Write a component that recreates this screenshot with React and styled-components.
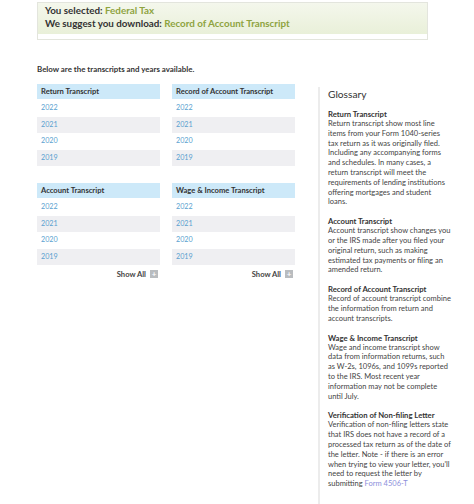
import React from 'react'
import styled, { createGlobalStyle } from 'styled-components'

const Global = createGlobalStyle`
  html, body { margin: 0; padding: 0; background: #fff; }
  body { font-family: Lato, "Liberation Sans", sans-serif; color: #333; }
  * { box-sizing: border-box; }
`

const Page = styled.div`
  width: 474px;
  padding: 2px 0 0 37px;
`

const Banner = styled.div`
  width: 391px;
  border: 1px solid #e3e5dd;
  background: #fff;
  padding-bottom: 5px;
`

const BannerInner = styled.div`
  background: linear-gradient(#f4f7ec, #e9f0d9);
  padding: 1px 7px 4px;
  & > p {
    margin: 0;
    font-size: 9.8px;
    line-height: 13px;
    font-weight: 700;
    color: #333;
  }
  & span { color: #8ea33f; }
`

const Body = styled.div`
  display: flex;
  align-items: flex-start;
  margin-top: 23px;
`

const Main = styled.div`
  width: 258px;
  flex: none;
`

const Intro = styled.p`
  margin: 0 0 9px;
  font-size: 7.9px;
  font-weight: 700;
  line-height: 12px;
  color: #333;
`

const Grid = styled.div`
  display: grid;
  grid-template-columns: 123px 123px;
  column-gap: 12px;
  row-gap: 17px;
`

const Table = styled.div`
  display: flex;
  flex-direction: column;
`

const Head = styled.div`
  height: 15px;
  background: #cde9f9;
  margin-bottom: 1px;
  padding-left: 4px;
  font-size: 7.6px;
  font-weight: 700;
  line-height: 15px;
  color: #333;
`

const Row = styled.div`
  height: 16.5px;
  padding-left: 4px;
  line-height: 16.5px;
  font-size: 7.2px;
  color: #5a9fd0;
  background: ${p => (p.$shade ? '#efeff2' : '#fff')};
`

const Footer = styled.div`
  display: flex;
  justify-content: flex-end;
  align-items: center;
  gap: 4px;
  height: 14px;
  padding-right: 2px;
  margin-top: -15px;
  font-size: 7.6px;
  font-weight: 700;
  color: #444;
`

const Plus = styled.span`
  width: 8px;
  height: 8px;
  background: #b9bcbf;
  display: grid;
  place-items: center;
  color: #fff;
  font-size: 8px;
  line-height: 8px;
  font-weight: 700;
`

const Sidebar = styled.aside`
  flex: none;
  margin-left: 23px;
  margin-top: 24px;
  border-left: 2px solid #ececec;
  padding: 0 0 12px 8px;
  width: 156px;
`

const GlossTitle = styled.h3`
  margin: 0 0 8px;
  font-size: 10.2px;
  font-weight: 400;
  line-height: 14px;
  color: #333;
`

const Term = styled.div`
  margin-bottom: 9px;
  width: 123px;
  & > h4 {
    margin: 0;
    font-size: 7.7px;
    font-weight: 700;
    line-height: 10px;
    color: #333;
  }
  & > p {
    margin: 0;
    font-size: 7.5px;
    line-height: 9.8px;
    color: #444;
  }
  & a { color: #8c8fdb; text-decoration: none; }
`

const years = ['2022', '2021', '2020', '2019']

const tables = [
  'Return Transcript',
  'Record of Account Transcript',
  'Account Transcript',
  'Wage & Income Transcript',
]

const glossary = [
  ['Return Transcript', 'Return transcript show most line items from your Form 1040-series tax return as it was originally filed. Including any accompanying forms and schedules. In many cases, a return transcript will meet the requirements of lending institutions offering mortgages and student loans.'],
  ['Account Transcript', 'Account transcript show changes you or the IRS made after you filed your original return, such as making estimated tax payments or filing an amended return.'],
  ['Record of Account Transcript', 'Record of account transcript combine the information from return and account transcripts.'],
  ['Wage & Income Transcript', 'Wage and income transcript show data from information returns, such as W-2s, 1096s, and 1099s reported to the IRS. Most recent year information may not be complete until July.'],
]

function YearTable({ title }) {
  return (
    <Table>
      <Head>{title}</Head>
      {years.map((y, i) => (
        <Row key={y} $shade={i % 2 === 1}>{y}</Row>
      ))}
    </Table>
  )
}

export default function App() {
  return (
    <Page>
      <Global />
      <Banner>
        <BannerInner>
          <p>You selected: <span>Federal Tax</span></p>
          <p>We suggest you download: <span>Record of Account Transcript</span></p>
        </BannerInner>
      </Banner>
      <Body>
        <Main>
          <Intro>Below are the transcripts and years available.</Intro>
          <Grid>
            {tables.map(t => (
              <YearTable key={t} title={t} />
            ))}
            <Footer>Show All <Plus>+</Plus></Footer>
            <Footer>Show All <Plus>+</Plus></Footer>
          </Grid>
        </Main>
        <Sidebar>
          <GlossTitle>Glossary</GlossTitle>
          {glossary.map(([t, d]) => (
            <Term key={t}>
              <h4>{t}</h4>
              <p>{d}</p>
            </Term>
          ))}
          <Term>
            <h4>Verification of Non-filing Letter</h4>
            <p>
              Verification of non-filing letters state that IRS does not have a record of a
              processed tax return as of the date of the letter. Note - if there is an error
              when trying to view your letter, you'll need to request the letter by
              submitting <a href="#">Form 4506-T</a>
            </p>
          </Term>
        </Sidebar>
      </Body>
    </Page>
  )
}
